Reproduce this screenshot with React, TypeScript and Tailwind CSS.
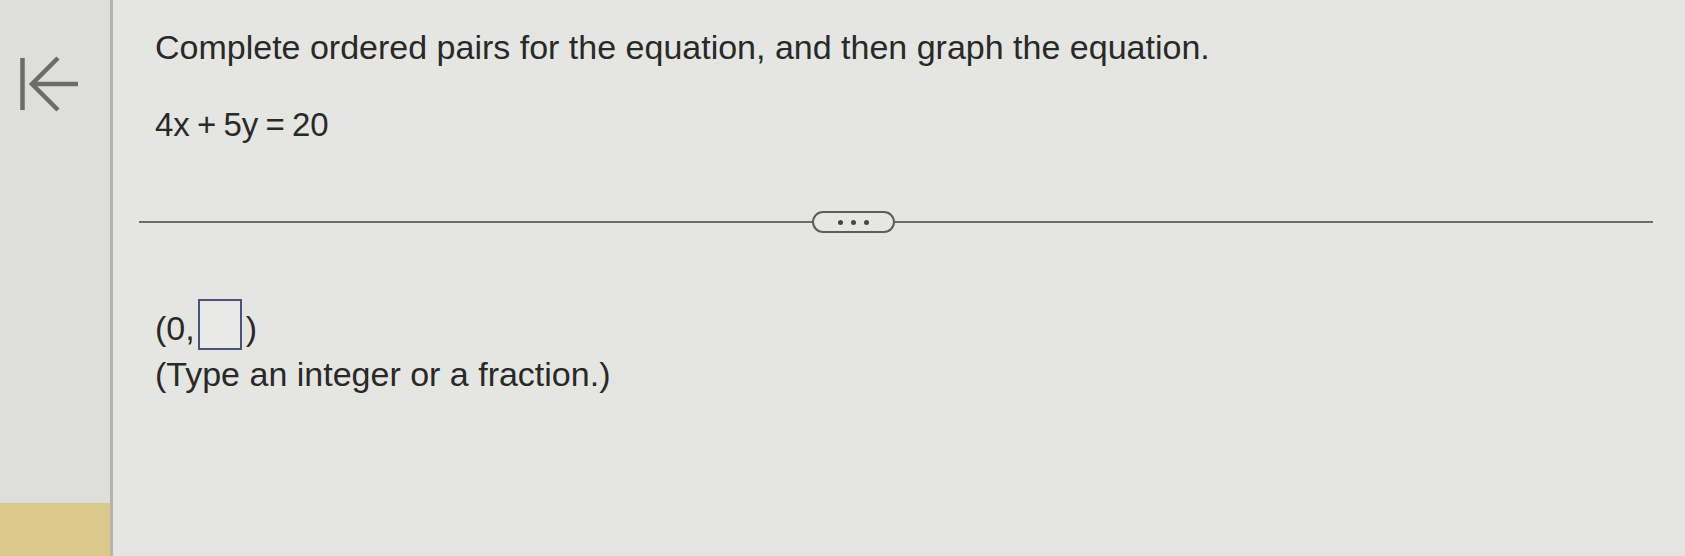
import React from "react";

function ExpandPill() {
  return (
    <button className="flex items-center justify-center gap-[8px] w-[83px] h-[22px] shrink-0 rounded-full border-2 border-[#5c5d5b] bg-[#e6e7e3]">
      <span className="block w-[5px] h-[5px] rounded-full bg-[#454644]" />
      <span className="block w-[5px] h-[5px] rounded-full bg-[#454644]" />
      <span className="block w-[5px] h-[5px] rounded-full bg-[#454644]" />
    </button>
  );
}

export default function App() {
  return (
    <div
      className="flex w-[1685px] h-[556px] overflow-hidden bg-[#e5e6e2] text-[#282928]"
      style={{ fontFamily: '"Liberation Sans", Arial, sans-serif' }}
    >
      {/* left rail */}
      <aside className="flex flex-col w-[113px] shrink-0 border-r-[3px] border-[#b3b4b0] bg-[#dedfda]">
        <div className="flex-1 pt-[54px]">
          <svg width="90" height="60" viewBox="0 0 90 60" fill="none" className="block">
            <line x1="22.5" y1="4" x2="22.5" y2="56" stroke="#6b6d6a" strokeWidth="4.5" />
            <line x1="32" y1="30" x2="78" y2="30" stroke="#6b6d6a" strokeWidth="4.5" />
            <polyline points="58,4 32,30 58,56" stroke="#6b6d6a" strokeWidth="4.5" fill="none" />
          </svg>
        </div>
        <div className="h-[53px] bg-[#d9ca8c]" />
      </aside>

      {/* question */}
      <main className="flex-1 pl-[42px] pr-[32px] pt-[28px] text-[34px] leading-[38px]">
        <h1 className="font-normal">
          Complete ordered pairs for the equation, and then graph the equation.
        </h1>
        <p className="mt-[40px] text-[33px] [word-spacing:-2px]">4x + 5y = 20</p>

        <div className="flex items-center mt-[67px] -ml-4">
          <div className="w-[673px] shrink-0 h-[2px] bg-[#6c6d6b]" />
          <ExpandPill />
          <div className="flex-1 h-[2px] bg-[#6c6d6b]" />
        </div>

        <div className="flex items-center mt-[66px]">
          <span className="pt-[6px]">(0,</span>
          <span className="block ml-[3px] w-[44px] h-[51px] border-2 border-[#4b5478] bg-[#e9eae7]" />
          <span className="pt-[6px] ml-[4px]">)</span>
        </div>
        <p className="mt-[5px]">(Type an integer or a fraction.)</p>
      </main>
    </div>
  );
}
